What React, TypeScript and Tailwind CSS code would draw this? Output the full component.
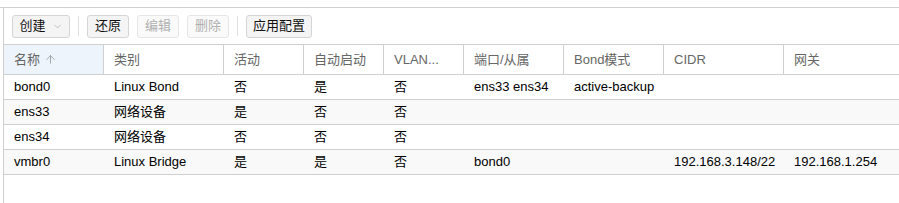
import { ArrowUp, ChevronDown } from "lucide-react";

const font = { fontFamily: '"Liberation Sans", "Noto Sans CJK SC", sans-serif' };

const columns = [
  { key: "name", label: "名称", width: "w-[100px]" },
  { key: "type", label: "类别", width: "w-[120px]" },
  { key: "active", label: "活动", width: "w-[80px]" },
  { key: "autostart", label: "自动启动", width: "w-[80px]" },
  { key: "vlan", label: "VLAN...", width: "w-[80px]" },
  { key: "ports", label: "端口/从属", width: "w-[100px]" },
  { key: "bond", label: "Bond模式", width: "w-[100px]" },
  { key: "cidr", label: "CIDR", width: "w-[120px]" },
  { key: "gateway", label: "网关", width: "flex-1" },
];

const rows = [
  ["bond0", "Linux Bond", "否", "是", "否", "ens33 ens34", "active-backup", "", ""],
  ["ens33", "网络设备", "是", "否", "否", "", "", "", ""],
  ["ens34", "网络设备", "否", "否", "否", "", "", "", ""],
  ["vmbr0", "Linux Bridge", "是", "是", "否", "bond0", "", "192.168.3.148/22", "192.168.1.254"],
];

function ToolButton({
  label,
  width,
  disabled,
  menu,
}: {
  label: string;
  width: string;
  disabled?: boolean;
  menu?: boolean;
}) {
  return (
    <button
      className={
        width +
        " h-[23px] rounded-[3px] border text-[13px] flex items-center justify-center gap-[6px] " +
        (disabled
          ? "border-[#e6e6e6] bg-[#fafafa] text-[#b0b0b0]"
          : "border-[#d5d5d5] bg-[#f4f4f4] text-[#111]")
      }
    >
      {label}
      {menu && <ChevronDown size={11} strokeWidth={1.5} className="text-[#aaa]" />}
    </button>
  );
}

function Separator() {
  return <div className="w-px h-[20px] bg-[#e0e0e0]" />;
}

export default function App() {
  return (
    <div className="w-[899px] h-[203px] bg-white pt-[7px] overflow-hidden" style={font}>
      <div className="border-t border-[#d0d0d0]">
        <div className="ml-[3px] border-l border-[#d0d0d0] h-[196px]">
          {/* Toolbar */}
          <div className="h-[36px] flex items-center pl-[8px] gap-[8px]">
            <ToolButton label="创建" width="w-[58px]" menu />
            <Separator />
            <ToolButton label="还原" width="w-[42px]" />
            <ToolButton label="编辑" width="w-[42px]" disabled />
            <ToolButton label="删除" width="w-[42px]" disabled />
            <Separator />
            <ToolButton label="应用配置" width="w-[66px]" />
          </div>

          {/* Header */}
          <div className="flex h-[31px] border-y border-[#d0d0d0] text-[13px] text-[#666]">
            {columns.map((c, i) => (
              <div
                key={c.key}
                className={
                  c.width +
                  " flex items-center pl-[10px] " +
                  (i < columns.length - 1 ? "border-r border-[#d0d0d0] " : "") +
                  (i === 0 ? "bg-[#eef4fb]" : "")
                }
              >
                {c.label}
                {i === 0 && (
                  <ArrowUp size={13} strokeWidth={1.1} className="ml-[4px] text-[#777]" />
                )}
              </div>
            ))}
          </div>

          {/* Rows */}
          {rows.map((r, ri) => (
            <div
              key={r[0]}
              className={
                "flex h-[25px] border-b border-[#d0d0d0] text-[13px] text-black " +
                (ri % 2 === 1 ? "bg-[#f9f9f9]" : "bg-white")
              }
            >
              {r.map((cell, ci) => (
                <div key={ci} className={columns[ci].width + " flex items-center pl-[10px]"}>
                  {cell}
                </div>
              ))}
            </div>
          ))}
        </div>
      </div>
    </div>
  );
}
